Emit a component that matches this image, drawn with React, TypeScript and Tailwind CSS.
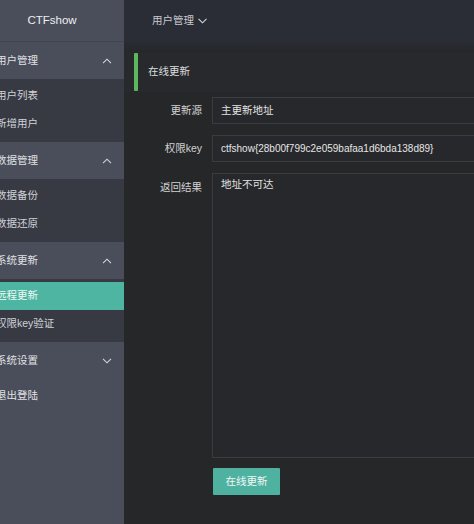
import React from "react";

const font = "font-['Liberation_Sans','Noto_Sans_CJK_SC',sans-serif]";

function Chevron({ up, w = 10 }: { up?: boolean; w?: number }) {
  return (
    <svg width={w} height="6" viewBox="0 0 10 6" className="shrink-0">
      <path
        d={up ? "M1 5.2 L5 1.2 L9 5.2" : "M1 0.8 L5 4.8 L9 0.8"}
        fill="none"
        stroke="#d4d6db"
        strokeWidth="1.1"
      />
    </svg>
  );
}

function Group({ title, up }: { title: string; up?: boolean }) {
  return (
    <div className="h-[37px] flex items-center justify-between pl-[16px] pr-[12px] text-[10.5px] text-[#e0e2e6]">
      <span>{title}</span>
      <Chevron up={up} />
    </div>
  );
}

function Sub({ items, active }: { items: string[]; active?: number }) {
  return (
    <div className="bg-[#373943] pt-[3px] pb-[4px]">
      {items.map((t, i) => (
        <div
          key={t}
          className={
            "h-[28px] flex items-center pl-[16px] text-[10.5px] " +
            (i === active ? "bg-[#4db5a1] text-[#eef7f4]" : "text-[#d0d3d8]")
          }
        >
          {t}
        </div>
      ))}
    </div>
  );
}

export default function App() {
  return (
    <div className={"flex h-[524px] w-[474px] overflow-hidden " + font}>
      <aside className="-ml-[20px] w-[144px] shrink-0 bg-[#4a4e5a] flex flex-col">
        <div className="h-[42px] flex items-center justify-center border-b border-[#42454f] text-[11.5px] text-[#eeeff2]">
          CTFshow
        </div>
        <Group title="用户管理" up />
        <Sub items={["用户列表", "新增用户"]} />
        <Group title="数据管理" up />
        <Sub items={["数据备份", "数据还原"]} />
        <Group title="系统更新" up />
        <Sub items={["远程更新", "权限key验证"]} active={0} />
        <Group title="系统设置" />
        <div className="h-[34px] flex items-center pl-[16px] text-[10.5px] text-[#e0e2e6]">
          退出登陆
        </div>
      </aside>
      <main className="flex-1 bg-[#262729] flex flex-col">
        <div className="h-[42px] bg-[#2b2d36] flex items-center pl-[28px] gap-[3px] text-[10.5px] text-[#c8cad0]">
          <span>用户管理</span>
          <Chevron w={11} />
        </div>
        <div className="h-[10px] bg-gradient-to-b from-[#2a2c33] to-[#262729]" />
        <div className="h-[40px] bg-[#28292d] flex items-center pl-[10px]">
          <div className="w-[4px] h-[38px] bg-[#5cb85c] rounded-[1px]" />
          <span className="ml-[10px] text-[10.5px] text-[#dcdcdc]">在线更新</span>
        </div>
        <div className="pt-[5px] flex flex-col gap-[11px]">
          <div className="flex items-center">
            <label className="w-[88px] pr-[10px] text-right text-[10.5px] text-[#d2d2d2]">更新源</label>
            <div className="flex-1 h-[27px] border border-[#3b3c41] border-r-0 bg-[#27282b] flex items-center pl-[8px] text-[10.5px] text-[#e2e2e2]">
              主更新地址
            </div>
          </div>
          <div className="flex items-center">
            <label className="w-[88px] pr-[10px] text-right text-[10.5px] text-[#d2d2d2]">权限key</label>
            <div className="flex-1 h-[27px] border border-[#3b3c41] border-r-0 bg-[#27282b] flex items-center pl-[8px] text-[10px] text-[#e6e6e6] whitespace-nowrap overflow-hidden">
              ctfshow{"{"}28b00f799c2e059bafaa1d6bda138d89{"}"}
            </div>
          </div>
          <div className="flex items-start">
            <label className="w-[88px] pr-[10px] pt-[7px] text-right text-[10.5px] text-[#d2d2d2]">返回结果</label>
            <div className="flex-1 h-[285px] border border-[#3b3c41] border-r-0 bg-[#27282b] pl-[8px] pt-[3px] text-[10.5px] text-[#e2e2e2]">
              地址不可达
            </div>
          </div>
        </div>
        <div className="pl-[89px] pt-[10px]">
          <button className="h-[27px] w-[67px] bg-[#4fb19f] text-[10.5px] text-[#f0f7f5] rounded-[1px]">
            在线更新
          </button>
        </div>
      </main>
    </div>
  );
}
